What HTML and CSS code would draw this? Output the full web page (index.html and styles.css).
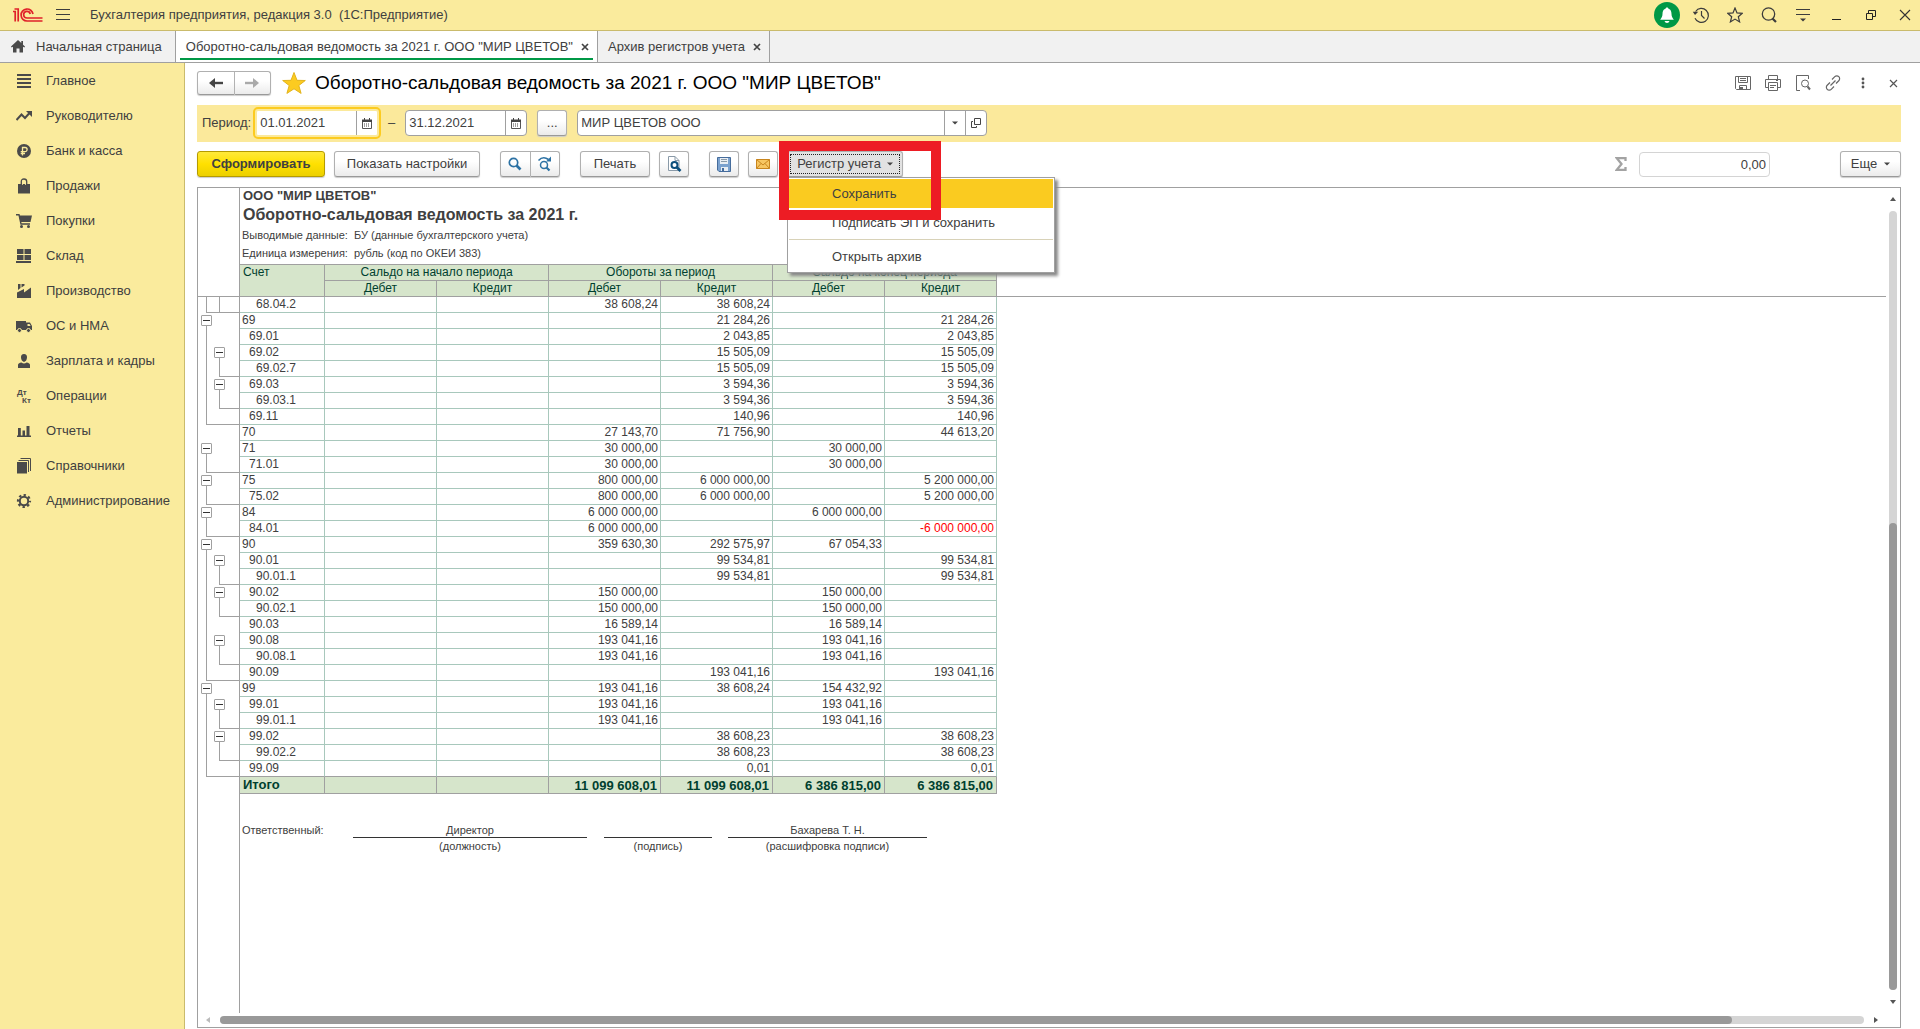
FILE: index.html
```html
<!DOCTYPE html>
<html lang="ru">
<head>
<meta charset="utf-8">
<title>Бухгалтерия предприятия, редакция 3.0 (1С:Предприятие)</title>
<link rel="stylesheet" href="styles.css">
</head>
<body>
<div class="app">
<header class="titlebar">
  <svg class="logo" width="30" height="14" viewBox="0 0 30 14" fill="none" stroke="#e0222a" stroke-width="1.7"><path d="M0 3.5H2.2V13.5M1.5 1H5.2V13.5"/><path d="M20 6A6 6 0 1 0 14 13H29.5M17.2 6A3.3 3.3 0 1 0 14 10H29.5"/></svg>
  <button class="plain menu-button" aria-label="Меню"><svg width="14" height="12" viewBox="0 0 14 12" stroke="#3c3c3c"><path d="M0 .5H14M0 5.5H14M0 10.5H14"/></svg></button>
  <span class="app-title">Бухгалтерия предприятия, редакция 3.0&nbsp; (1С:Предприятие)</span>
  <nav class="window-tools" aria-label="Окно">
    <button class="plain" aria-label="Уведомления"><svg width="26" height="26" viewBox="0 0 26 26"><circle cx="13" cy="13" r="13" fill="#009846"/><path d="M13 5.500c-1 0-1.400.6-1.500 1.300C9 7.600 8.600 9.800 8.500 12c-.1 2.500-.8 3.600-2.300 5.700h13.600c-1.500-2.100-2.200-3.200-2.300-5.700-.1-2.200-.5-4.400-3-5.200-.1-.7-.5-1.300-1.500-1.300zM10.500 19h5q-.6 2-2.500 2t-2.500-2z" fill="#fff"/></svg></button>
    <button class="plain" aria-label="История"><svg width="18" height="18" viewBox="0 0 18 18" fill="none" stroke="#3c3c3c" stroke-width="1.200"><path d="M3.600 5.500A7 7 0 1 1 3 12.300M9.500 5v4.500l3 3"/><path d="M.8 5.800h5.500L3 9z" fill="#3c3c3c" stroke="none"/></svg></button>
    <button class="plain" aria-label="Избранное"><svg width="16" height="16" viewBox="0 0 16 16" fill="none" stroke="#3c3c3c" stroke-width="1.200"><path d="M8 1l2 4.900 5.300.4-4 3.400 1.300 5.200L8 12.100l-4.600 2.800 1.300-5.200-4-3.400L6 5.900z"/></svg></button>
    <button class="plain" aria-label="Поиск"><svg width="16" height="16" viewBox="0 0 16 16" fill="none" stroke="#3c3c3c" stroke-width="1.300"><circle cx="7.500" cy="7" r="6.200"/><path d="M11.500 11.500L15 15" stroke-width="2.200"/></svg></button>
    <button class="plain" aria-label="Настройка"><svg width="14" height="14" viewBox="0 0 14 14"><path d="M0 1.500H14M0 6.500H14" stroke="#3c3c3c"/><path d="M4 10.500h6l-3 3z" fill="#3c3c3c"/></svg></button>
    <button class="plain" aria-label="Свернуть"><svg width="10" height="10" viewBox="0 0 10 10"><path d="M0 9.500H9" stroke="#222"/></svg></button>
    <button class="plain" aria-label="Развернуть"><svg width="10" height="10" viewBox="0 0 10 10" fill="none" stroke="#222"><path d="M.5 3.500h6v6h-6zM2.500 3V.5h7v6H7"/></svg></button>
    <button class="plain" aria-label="Закрыть"><svg width="12" height="12" viewBox="0 0 12 12" stroke="#333" stroke-width="1.100"><path d="M1 1l10 10M11 1L1 11"/></svg></button>
  </nav>
</header>
<nav class="tabs" aria-label="Вкладки">
  <a class="tab tab-home" href="#"><svg width="14" height="13" viewBox="0 0 14 13" fill="#4a4a4a"><path d="M7 0L0 6.500l.6 1L2 6.700V12.500H5.500V8.500H8.500V12.500H12V6.700l1.400.8.6-1-2-1.800V1H10.300V3z"/></svg>Начальная страница</a>
  <a class="tab active" href="#">Оборотно-сальдовая ведомость за 2021 г. ООО "МИР ЦВЕТОВ"<svg width="8" height="8" viewBox="0 0 8 8" stroke="#444" stroke-width="1.700"><path d="M1 1l6 6M7 1L1 7"/></svg></a>
  <a class="tab" href="#">Архив регистров учета<svg width="8" height="8" viewBox="0 0 8 8" stroke="#444" stroke-width="1.700"><path d="M1 1l6 6M7 1L1 7"/></svg></a>
</nav>
<div class="body">
<nav class="sidebar" aria-label="Разделы">
  <a href="#"><svg width="16" height="16" viewBox="0 0 16 16"><path d="M1 2H15M1 6H15M1 10H15M1 14H15" stroke="#4a4a4a" stroke-width="2"/></svg>Главное</a>
  <a href="#"><svg width="16" height="16" viewBox="0 0 16 16"><path d="M.5 12L5.500 6.500 9 10l4.500-5" fill="none" stroke="#4a4a4a" stroke-width="2"/><path d="M10 3h6v6z" fill="#4a4a4a"/></svg>Руководителю</a>
  <a href="#"><svg width="16" height="16" viewBox="0 0 16 16"><circle cx="8" cy="8" r="7" fill="#4a4a4a"/><path d="M6.500 12.500V4.500H9a2 2 0 0 1 0 4.200H4.700M4.700 10.500H9" fill="none" stroke="#faeb9d" stroke-width="1.300"/></svg>Банк и касса</a>
  <a href="#"><svg width="16" height="16" viewBox="0 0 16 16"><path d="M2 6H14V15.500H2z" fill="#4a4a4a"/><path d="M5.300 7V3.500Q5.300 1 8 1t2.700 2.500V7" fill="none" stroke="#4a4a4a" stroke-width="1.300"/><path d="M6 6.500H6.800M9.200 6.500H10" stroke="#faeb9d"/></svg>Продажи</a>
  <a href="#"><svg width="16" height="16" viewBox="0 0 16 16"><path d="M0 1.700H3L5 11H14" fill="none" stroke="#4a4a4a" stroke-width="1.400"/><path d="M3 2.500H16L14.500 9H4.500z" fill="#4a4a4a"/><circle cx="5.500" cy="13.500" r="1.500" fill="#4a4a4a"/><circle cx="12.500" cy="13.500" r="1.500" fill="#4a4a4a"/></svg>Покупки</a>
  <a href="#"><svg width="16" height="16" viewBox="0 0 16 16" fill="#4a4a4a"><path d="M1 1H7.500V6H1zM8.500 1H15V6H8.500zM1 7H7.500V12H1zM8.500 7H15V12H8.500zM0 13H15V15H0z"/></svg>Склад</a>
  <a href="#"><svg width="16" height="16" viewBox="0 0 16 16" fill="#4a4a4a"><path d="M1 15V9.500L8 6V9.500L15 4.500V15zM2 1H4.500V5L2 7zM5.500 1H8.500V2.500L5.500 4.500z"/></svg>Производство</a>
  <a href="#"><svg width="16" height="16" viewBox="0 0 16 16"><path d="M0 3H10V4.500H14L16 8V12H0z" fill="#4a4a4a"/><path d="M11.500 6H13.500L14.600 8H11.500z" fill="#faeb9d"/><circle cx="3.500" cy="12.500" r="2" fill="#4a4a4a" stroke="#faeb9d"/><circle cx="12.500" cy="12.500" r="2" fill="#4a4a4a" stroke="#faeb9d"/></svg>ОС и НМА</a>
  <a href="#"><svg width="16" height="16" viewBox="0 0 16 16" fill="#4a4a4a"><path d="M8 1Q11.200 1 11 4.500T8 9Q5.200 8 5 4.500T8 1zM2 15V12Q2 10 5.500 9.500 8 11.500 10.500 9.500 14 10 14 12V15z"/></svg>Зарплата и кадры</a>
  <a href="#"><svg class="dtkt" width="16" height="16" viewBox="0 0 16 16" fill="#4a4a4a"><text x="1" y="7">Дт</text><text x="6" y="15">Кт</text></svg>Операции</a>
  <a href="#"><svg width="16" height="16" viewBox="0 0 16 16" fill="#4a4a4a"><path d="M1 12.500H15V14H1zM2 5H4.800V13H2zM6.500 7.500H9V13H6.500zM10.500 3H13.500V13H10.500z"/></svg>Отчеты</a>
  <a href="#"><svg width="16" height="16" viewBox="0 0 16 16"><path d="M1 4H11V15.500H1z" fill="#4a4a4a"/><path d="M2.500 2.500H12.500V14M4.500 .5H14.500V13" fill="none" stroke="#4a4a4a"/></svg>Справочники</a>
  <a href="#"><svg width="16" height="16" viewBox="0 0 16 16" fill="none" stroke="#4a4a4a"><circle cx="8" cy="8" r="4.200" stroke-width="2"/><circle cx="8" cy="8" r="6" stroke-width="2.200" stroke-dasharray="2.350 2.360" stroke-dashoffset="1.100"/></svg>Администрирование</a>
</nav>
<main class="main">
  <div class="page-head">
    <div class="group nav-group">
      <button class="btn" aria-label="Назад"><svg width="14" height="10" viewBox="0 0 14 10"><path d="M3 5H14" stroke="#444" stroke-width="2.400"/><path d="M0 5L6 0V10z" fill="#444"/></svg></button>
      <button class="btn" aria-label="Вперед"><svg width="14" height="10" viewBox="0 0 14 10"><path d="M0 5H11" stroke="#aaa" stroke-width="2.400"/><path d="M14 5L8 0V10z" fill="#aaa"/></svg></button>
    </div>
    <svg class="star" width="24" height="22" viewBox="0 0 24 22"><path d="M12 .5l3 7.800 8.300.2-6.500 5 2.300 7.900L12 16.800l-7.100 4.600 2.300-7.900-6.500-5L9 8.300z" fill="#fccb20" stroke="#e2b31c"/></svg>
    <h1>Оборотно-сальдовая ведомость за 2021 г. ООО "МИР ЦВЕТОВ"</h1>
    <div class="page-tools">
      <button class="plain" aria-label="Сохранить"><svg width="16" height="16" viewBox="0 0 16 16" fill="none" stroke="#666"><path d="M.5 1.500H15.500V14.500H1.500L.5 13.500zM3.500 1.500V7.500H12.500V1.500M5 3.500H11M5 5.500H11M4.500 14V10.500H11.500V14"/><path d="M5 12H8V14H5z" fill="#666" stroke="none"/></svg></button>
      <button class="plain" aria-label="Печать"><svg width="16" height="16" viewBox="0 0 16 16" fill="none" stroke="#666"><path d="M3.500 4V.5H12.500V4M3 12.500H.5V4.500H15.500V12.500H13M3.500 7.500H12.500V15.500H3.500zM5 10.500H11M5 12.500H9M11 5.500H13"/></svg></button>
      <button class="plain" aria-label="Просмотр"><svg width="16" height="16" viewBox="0 0 16 16" fill="none" stroke="#666"><path d="M5 15.500H1.500V.5H13.500V4"/><circle cx="10" cy="8.500" r="3.500"/><path d="M12.500 11.500L15 14.500" stroke-width="2"/></svg></button>
      <button class="plain" aria-label="Ссылка"><svg width="16" height="16" viewBox="0 0 16 16" fill="none" stroke="#666" stroke-width="1.200"><path d="M7 4.500l2.800-2.800a2.800 2.800 0 0 1 4 0 2.800 2.800 0 0 1 0 4L11 8.500M9 11.500l-2.800 2.800a2.800 2.800 0 0 1-4 0 2.800 2.800 0 0 1 0-4L5 7.500M5.500 10.500l5-5"/></svg></button>
      <button class="plain" aria-label="Еще"><svg width="16" height="16" viewBox="0 0 16 16" fill="#555"><circle cx="8" cy="4" r="1.400"/><circle cx="8" cy="8" r="1.400"/><circle cx="8" cy="12" r="1.400"/></svg></button>
      <button class="plain" aria-label="Закрыть"><svg width="16" height="16" viewBox="0 0 16 16" stroke="#555" stroke-width="1.200"><path d="M5 5l7 7M12 5l-7 7"/></svg></button>
    </div>
  </div>
  <form class="period">
    <label for="from">Период:</label>
    <div class="field date focused"><input id="from" value="01.01.2021"><button type="button" aria-label="Календарь"><svg width="10" height="11" viewBox="0 0 10 11"><path d="M.5 2.500H9.500V10.500H.5z" fill="#fff" stroke="#555"/><path d="M0 1.500H10V4H0z" fill="#444"/><path d="M2.500 0V2M7.500 0V2" stroke="#444"/><path d="M2 6H8M2 8H8" stroke="#444" stroke-dasharray="1 1"/></svg></button></div>
    <span class="dash">–</span>
    <div class="field date"><input aria-label="Конец периода" value="31.12.2021"><button type="button" aria-label="Календарь"><svg width="10" height="11" viewBox="0 0 10 11"><path d="M.5 2.500H9.500V10.500H.5z" fill="#fff" stroke="#555"/><path d="M0 1.500H10V4H0z" fill="#444"/><path d="M2.500 0V2M7.500 0V2" stroke="#444"/><path d="M2 6H8M2 8H8" stroke="#444" stroke-dasharray="1 1"/></svg></button></div>
    <button type="button" class="btn square">...</button>
    <div class="field org"><input aria-label="Организация" value="МИР ЦВЕТОВ ООО"><button type="button" aria-label="Выбрать"><svg width="6" height="4" viewBox="0 0 6 4"><path d="M0 .5H6L3 3.500z" fill="#444"/></svg></button><button type="button" aria-label="Открыть"><svg width="10" height="10" viewBox="0 0 10 10" fill="none" stroke="#444"><path d="M3.500 .5H9.500V6.500H3.500zM2 3.500H.5V9.500H5.500V8"/></svg></button></div>
  </form>
  <div class="toolbar">
    <button class="btn primary">Сформировать</button>
    <button class="btn settings">Показать настройки</button>
    <div class="group find-group">
      <button class="btn" aria-label="Найти"><svg width="14" height="14" viewBox="0 0 14 14" fill="none" stroke="#2d72a4"><circle cx="5.500" cy="5.500" r="4.200" stroke-width="1.700"/><path d="M8.500 8.500L12.500 12.500" stroke-width="2.600"/></svg></button>
      <button class="btn" aria-label="Найти далее"><svg width="16" height="16" viewBox="0 0 16 16" fill="none" stroke="#2d72a4"><circle cx="7" cy="9" r="3.500" stroke-width="1.500"/><path d="M9.500 11.500L12.500 14.500" stroke-width="2.200"/><path d="M1.500 4.500Q6-.5 11.500 3.500" stroke-width="1.600"/><path d="M14 .5V5.500H9z" fill="#2d72a4" stroke="none"/></svg></button>
    </div>
    <button class="btn print">Печать</button>
    <button class="btn square view" aria-label="Предварительный просмотр"><svg width="16" height="16" viewBox="0 0 16 16" fill="none"><path d="M2.500 .5H9L13 4.500V14.500H2.500z" fill="#fff" stroke="#8a9aa8"/><path d="M9 .5V4.500H13" stroke="#8a9aa8"/><circle cx="8.500" cy="9" r="3" fill="#fff" stroke="#0d4f7c" stroke-width="2"/><path d="M10.500 11L14.500 15" stroke="#0d4f7c" stroke-width="2.600"/></svg></button>
    <button class="btn square save" aria-label="Сохранить"><svg width="14" height="15" viewBox="0 0 14 15"><path d="M.5 .5H13.500V14.500H2L.5 13z" fill="#7ba2cf" stroke="#456c9c"/><path d="M3 1H11V7H3zM4 10H11V14H4z" fill="#e9eef4"/><path d="M4 2.500H10M4 4.500H10" stroke="#8a9aa8"/><path d="M5 11H7V14H5z" fill="#456c9c"/></svg></button>
    <button class="btn square mail" aria-label="Отправить по почте"><svg width="14" height="10" viewBox="0 0 14 10"><path d="M.5 .5H13.500V9.500H.5z" fill="#f7c763" stroke="#c8851e"/><path d="M.5 .5L7 6 13.500 .5M.5 9.500L5 4.500M13.500 9.500L9 4.500" fill="none" stroke="#c8851e"/></svg></button>
    <div class="dropdown">
      <button class="btn register" aria-haspopup="menu" aria-expanded="true">Регистр учета<svg width="6" height="4" viewBox="0 0 6 4"><path d="M0 .5H6L3 3.500z" fill="#444"/></svg></button>
      <div class="menu" role="menu">
        <button class="selected" role="menuitem">Сохранить</button>
        <button role="menuitem">Подписать ЭП и сохранить</button>
        <hr>
        <button role="menuitem">Открыть архив</button>
      </div>
      <div class="highlight"></div>
    </div>
    <svg class="sigma" width="12" height="14" viewBox="0 0 12 14"><path d="M10.500 4V1.200H1.800L6.500 7 1.800 12.800H10.500V10" fill="none" stroke="#a3a3a3" stroke-width="2.300"/></svg>
    <input class="sum" aria-label="Сумма" value="0,00" readonly>
    <button class="btn more">Еще<svg width="6" height="4" viewBox="0 0 6 4"><path d="M0 .5H6L3 3.500z" fill="#444"/></svg></button>
  </div>
  <section class="frame">
    <div class="sheet">
      <div class="doc-head">
        <p class="company">ООО "МИР ЦВЕТОВ"</p>
        <h2>Оборотно-сальдовая ведомость за 2021 г.</h2>
        <p><span>Выводимые данные:</span>БУ (данные бухгалтерского учета)</p>
        <p><span>Единица измерения:</span>рубль (код по ОКЕИ 383)</p>
      </div>
      <table>
        <colgroup><col class="c-tree"><col class="c-acc"><col class="c-num"><col class="c-num"><col class="c-num"><col class="c-num"><col class="c-num"><col class="c-num"><col></colgroup>
        <thead>
          <tr><td rowspan="2" class="edge"></td><th rowspan="2" class="acc">Счет</th><th colspan="2">Сальдо на начало периода</th><th colspan="2">Обороты за период</th><th colspan="2">Сальдо на конец периода</th><td rowspan="2" class="edge"></td></tr>
          <tr><th>Дебет</th><th>Кредит</th><th>Дебет</th><th>Кредит</th><th>Дебет</th><th>Кредит</th></tr>
        </thead>
        <tbody>
          <tr><td class="tree end1"><i class="line"></i><i class="line"></i></td><td class="lv3">68.04.2</td><td></td><td></td><td>38 608,24</td><td>38 608,24</td><td></td><td></td></tr>
          <tr><td class="tree"><button aria-label="Свернуть 69"></button></td><td>69</td><td></td><td></td><td></td><td>21 284,26</td><td></td><td>21 284,26</td></tr>
          <tr><td class="tree"><i class="line"></i></td><td class="lv2">69.01</td><td></td><td></td><td></td><td>2 043,85</td><td></td><td>2 043,85</td></tr>
          <tr><td class="tree"><i class="line"></i><button aria-label="Свернуть 69.02"></button></td><td class="lv2">69.02</td><td></td><td></td><td></td><td>15 505,09</td><td></td><td>15 505,09</td></tr>
          <tr><td class="tree end2"><i class="line"></i><i class="line"></i></td><td class="lv3">69.02.7</td><td></td><td></td><td></td><td>15 505,09</td><td></td><td>15 505,09</td></tr>
          <tr><td class="tree"><i class="line"></i><button aria-label="Свернуть 69.03"></button></td><td class="lv2">69.03</td><td></td><td></td><td></td><td>3 594,36</td><td></td><td>3 594,36</td></tr>
          <tr><td class="tree end2"><i class="line"></i><i class="line"></i></td><td class="lv3">69.03.1</td><td></td><td></td><td></td><td>3 594,36</td><td></td><td>3 594,36</td></tr>
          <tr><td class="tree end1"><i class="line"></i></td><td class="lv2">69.11</td><td></td><td></td><td></td><td>140,96</td><td></td><td>140,96</td></tr>
          <tr><td class="tree"></td><td>70</td><td></td><td></td><td>27 143,70</td><td>71 756,90</td><td></td><td>44 613,20</td></tr>
          <tr><td class="tree"><button aria-label="Свернуть 71"></button></td><td>71</td><td></td><td></td><td>30 000,00</td><td></td><td>30 000,00</td><td></td></tr>
          <tr><td class="tree end1"><i class="line"></i></td><td class="lv2">71.01</td><td></td><td></td><td>30 000,00</td><td></td><td>30 000,00</td><td></td></tr>
          <tr><td class="tree"><button aria-label="Свернуть 75"></button></td><td>75</td><td></td><td></td><td>800 000,00</td><td>6 000 000,00</td><td></td><td>5 200 000,00</td></tr>
          <tr><td class="tree end1"><i class="line"></i></td><td class="lv2">75.02</td><td></td><td></td><td>800 000,00</td><td>6 000 000,00</td><td></td><td>5 200 000,00</td></tr>
          <tr><td class="tree"><button aria-label="Свернуть 84"></button></td><td>84</td><td></td><td></td><td>6 000 000,00</td><td></td><td>6 000 000,00</td><td></td></tr>
          <tr><td class="tree end1"><i class="line"></i></td><td class="lv2">84.01</td><td></td><td></td><td>6 000 000,00</td><td></td><td></td><td class="negative">-6 000 000,00</td></tr>
          <tr><td class="tree"><button aria-label="Свернуть 90"></button></td><td>90</td><td></td><td></td><td>359 630,30</td><td>292 575,97</td><td>67 054,33</td><td></td></tr>
          <tr><td class="tree"><i class="line"></i><button aria-label="Свернуть 90.01"></button></td><td class="lv2">90.01</td><td></td><td></td><td></td><td>99 534,81</td><td></td><td>99 534,81</td></tr>
          <tr><td class="tree end2"><i class="line"></i><i class="line"></i></td><td class="lv3">90.01.1</td><td></td><td></td><td></td><td>99 534,81</td><td></td><td>99 534,81</td></tr>
          <tr><td class="tree"><i class="line"></i><button aria-label="Свернуть 90.02"></button></td><td class="lv2">90.02</td><td></td><td></td><td>150 000,00</td><td></td><td>150 000,00</td><td></td></tr>
          <tr><td class="tree end2"><i class="line"></i><i class="line"></i></td><td class="lv3">90.02.1</td><td></td><td></td><td>150 000,00</td><td></td><td>150 000,00</td><td></td></tr>
          <tr><td class="tree"><i class="line"></i></td><td class="lv2">90.03</td><td></td><td></td><td>16 589,14</td><td></td><td>16 589,14</td><td></td></tr>
          <tr><td class="tree"><i class="line"></i><button aria-label="Свернуть 90.08"></button></td><td class="lv2">90.08</td><td></td><td></td><td>193 041,16</td><td></td><td>193 041,16</td><td></td></tr>
          <tr><td class="tree end2"><i class="line"></i><i class="line"></i></td><td class="lv3">90.08.1</td><td></td><td></td><td>193 041,16</td><td></td><td>193 041,16</td><td></td></tr>
          <tr><td class="tree end1"><i class="line"></i></td><td class="lv2">90.09</td><td></td><td></td><td></td><td>193 041,16</td><td></td><td>193 041,16</td></tr>
          <tr><td class="tree"><button aria-label="Свернуть 99"></button></td><td>99</td><td></td><td></td><td>193 041,16</td><td>38 608,24</td><td>154 432,92</td><td></td></tr>
          <tr><td class="tree"><i class="line"></i><button aria-label="Свернуть 99.01"></button></td><td class="lv2">99.01</td><td></td><td></td><td>193 041,16</td><td></td><td>193 041,16</td><td></td></tr>
          <tr><td class="tree end2"><i class="line"></i><i class="line"></i></td><td class="lv3">99.01.1</td><td></td><td></td><td>193 041,16</td><td></td><td>193 041,16</td><td></td></tr>
          <tr><td class="tree"><i class="line"></i><button aria-label="Свернуть 99.02"></button></td><td class="lv2">99.02</td><td></td><td></td><td></td><td>38 608,23</td><td></td><td>38 608,23</td></tr>
          <tr><td class="tree end2"><i class="line"></i><i class="line"></i></td><td class="lv3">99.02.2</td><td></td><td></td><td></td><td>38 608,23</td><td></td><td>38 608,23</td></tr>
          <tr class="last"><td class="tree end1"><i class="line"></i></td><td class="lv2">99.09</td><td></td><td></td><td></td><td>0,01</td><td></td><td>0,01</td></tr>
        </tbody>
        <tfoot>
          <tr><td class="tree"></td><th scope="row" class="acc">Итого</th><td></td><td></td><td>11 099 608,01</td><td>11 099 608,01</td><td>6 386 815,00</td><td>6 386 815,00</td></tr>
        </tfoot>
      </table>
      <div class="signatures">
        <span class="who">Ответственный:</span>
        <div class="sign position"><span>Директор</span><small>(должность)</small></div>
        <div class="sign autograph"><span></span><small>(подпись)</small></div>
        <div class="sign fullname"><span>Бахарева Т. Н.</span><small>(расшифровка подписи)</small></div>
      </div>
    </div>
    <div class="vscroll"><svg width="6" height="4" viewBox="0 0 6 4"><path d="M0 4H6L3 0z" fill="#555"/></svg><div class="track"><div class="thumb"></div></div><svg width="6" height="4" viewBox="0 0 6 4"><path d="M0 0H6L3 4z" fill="#555"/></svg></div>
    <div class="hscroll"><svg width="4" height="6" viewBox="0 0 4 6"><path d="M4 0V6L0 3z" fill="#bbb"/></svg><div class="track"><div class="thumb"></div></div><svg width="4" height="6" viewBox="0 0 4 6"><path d="M0 0V6L4 3z" fill="#555"/></svg></div>
  </section>
</main>
</div>
</div>
</body>
</html>
```
FILE: styles.css
```css
* { box-sizing: border-box; }
body { margin: 0; font: 13px/16px "Liberation Sans", Arial, sans-serif; color: #404040; background: #fff; }
button, input { font: inherit; color: inherit; }
button { padding: 0; cursor: pointer; }
svg { flex: none; }
h1, h2, p { margin: 0; }
.app { display: flex; flex-direction: column; min-height: 100vh; }
.plain { display: flex; align-items: center; justify-content: center; border: 0; background: none; }

.titlebar { display: flex; align-items: center; height: 31px; padding: 0 2px 0 13px; background: #faeb9d; border-bottom: 1px solid #cabb6c; }
.menu-button { margin: 0 20px 0 13px; }
.app-title { white-space: nowrap; }
.window-tools { display: flex; gap: 8px; margin-left: auto; }
.window-tools .plain { width: 26px; height: 30px; }

.tabs { display: flex; height: 32px; background: #f1f1f1; border-bottom: 1px solid #a0a0a0; }
.tab { display: flex; align-items: center; gap: 8px; padding: 0 8px 0 10px; border-right: 1px solid #a0a0a0; color: inherit; text-decoration: none; white-space: nowrap; }
.tab-home { gap: 11px; padding: 0 13px 0 11px; }
.tab.active { background: linear-gradient(#009846, #009846) center 27px / calc(100% - 8px) 2px no-repeat #fff; }

.body { display: flex; flex: 1; }
.sidebar { flex: none; width: 185px; background: #faeb9d; border-right: 1px solid #cabb6c; }
.sidebar a { display: flex; align-items: center; gap: 14px; height: 35px; padding-left: 16px; color: inherit; text-decoration: none; }
.dtkt text { font: bold 8px "Liberation Sans", Arial, sans-serif; }

.main { display: flex; flex: 1; flex-direction: column; min-width: 0; padding: 0 19px 1px 12px; }
.btn { display: flex; align-items: center; justify-content: center; height: 26px; border: 1px solid #b0b0b0; border-bottom-color: #999; border-radius: 3px; background: linear-gradient(#fff 40%, #ebebeb); box-shadow: 0 1px 1px #ccc; white-space: nowrap; }
.square { width: 30px; }
.group { display: flex; }
.group .btn { flex: 1; }
.group .btn:first-child { border-radius: 3px 0 0 3px; }
.group .btn:last-child { border-left: 0; border-radius: 0 3px 3px 0; }

.page-head { display: flex; align-items: center; height: 42px; padding-bottom: 2px; }
.nav-group { width: 74px; }
.nav-group .btn { height: 24px; }
.star { margin: 0 9px 0 11px; }
h1 { font-size: 19px; line-height: 22px; font-weight: normal; color: #000; white-space: nowrap; }
.page-tools { display: flex; gap: 14px; margin-left: auto; }

.period { display: flex; align-items: center; height: 37px; padding: 0 0 1px 5px; background: #fbe99b; }
.field { display: flex; height: 26px; border: 1px solid #a0a0a0; border-radius: 4px; background: #fff; }
.field input { flex: 1; min-width: 0; padding: 0 3px; border: 0; outline: 0; background: none; }
.field button { display: flex; align-items: center; justify-content: center; width: 21px; border: 0; border-left: 1px solid #a0a0a0; background: none; }
.date { width: 122px; }
.focused { margin-left: 5px; outline: 2px solid #fccb20; outline-offset: 1px; border-color: #fbe99b; border-radius: 2px; }
.dash { width: 27px; text-align: center; }
.period .square { margin: 0 10px; }
.org { width: 410px; }

.toolbar { display: flex; align-items: center; height: 45px; padding-bottom: 1px; }
.primary { width: 128px; border-color: #b59b00; background: linear-gradient(#ffe93a, #ffe000 50%, #ecd000); font-weight: bold; }
.settings { width: 146px; margin: 0 20px 0 9px; }
.find-group { width: 60px; }
.print { width: 70px; margin: 0 9px 0 20px; }
.save { margin: 0 9px 0 20px; }
.dropdown { position: relative; margin-left: 9px; }
.register { gap: 6px; width: 116px; background: #e2e2e2; outline: 1px dotted #222; outline-offset: -4px; }
.menu { position: absolute; z-index: 1; top: 26px; left: 0; width: 268px; padding: 1px; border: 1px solid #a0a0a0; background: #fff; box-shadow: 3px 3px 3px #888; }
.menu button { display: block; width: 100%; height: 29px; padding-left: 43px; border: 0; background: none; text-align: left; }
.menu .selected { background: #facb20; }
.menu hr { height: 1px; margin: 2px 0; border: 0; background: #d8d2b8; }
.highlight { position: absolute; z-index: 2; top: -10px; left: -8px; width: 162px; height: 79px; border: 10px solid #ed1c24; pointer-events: none; }
.sigma { margin-left: auto; }
.sum { width: 131px; height: 25px; margin: 0 70px 0 12px; padding: 0 3px; border: 1px solid #d4d4d4; border-radius: 4px; text-align: right; }
.more { gap: 7px; width: 61px; }

.frame { display: grid; flex: 1; grid-template: 1fr 14px / minmax(0, 1fr) 14px; border: 1px solid #a0a0a0; }
.sheet { background: linear-gradient(#a0a0a0, #a0a0a0) 41px 0 / 1px 100% no-repeat; font-size: 12px; line-height: 15px; }
.doc-head { height: 76px; padding-left: 44px; font-size: 11px; }
.doc-head p { height: 18px; line-height: 18px; }
.doc-head span { display: inline-block; width: 112px; }
.doc-head .company { height: 16px; padding-left: 1px; font-size: 13px; line-height: 16px; font-weight: bold; }
h2 { padding-left: 1px; font-size: 16px; line-height: 22px; }

table { width: 100%; table-layout: fixed; border-spacing: 0; }
.c-tree { width: 42px; }
.c-acc { width: 85px; }
.c-num { width: 112px; }
td, th { height: 16px; padding: 0 2px; border: 0 solid #a8c8bc; border-width: 0 1px 1px 0; text-align: right; white-space: nowrap; }
thead th { border-color: #a0a0a0; background: #d6e5cb; color: #003f2f; font-weight: normal; text-align: center; }
thead tr:first-child th { height: 17px; border-top-width: 1px; }
thead .acc, tfoot .acc { padding-left: 3px; text-align: left; vertical-align: top; }
thead .edge { border-width: 0 0 1px; border-color: #a0a0a0; }
tbody td:nth-child(2) { padding-left: 2px; text-align: left; }
tbody .lv2:nth-child(2) { padding-left: 9px; }
tbody .lv3:nth-child(2) { padding-left: 16px; }
.last td:not(.tree) { border-bottom-color: #a0a0a0; }
.negative { color: #f00; }
tfoot td, tfoot th { height: 17px; border-color: #a0a0a0; background: #d6e5cb; color: #003f2f; font-size: 13px; font-weight: bold; }
tfoot td { padding-right: 3px; }
td.tree { height: 16px; padding: 0 0 0 3px; border-width: 0; background: none; font-size: 0; line-height: 0; text-align: left; vertical-align: top; }
.tree button, .tree i { display: inline-block; width: 11px; margin-right: 2px; vertical-align: top; }
.tree button { height: 11px; margin-top: 2px; border: 1px solid #a0a0a0; border-radius: 1px; background: linear-gradient(#333, #333) center / 7px 1px no-repeat #fff; }
.line { height: 16px; background: linear-gradient(#a0a0a0, #a0a0a0) 5px 0 / 1px 100% no-repeat; }
td.tree:has(button) { background: linear-gradient(#a0a0a0, #a0a0a0) 8px 100% / 1px 3px no-repeat; }
td.tree:has(i + button) { background-position: 21px 100%; }
td.end1 { background: linear-gradient(#a0a0a0, #a0a0a0) 8px 100% / 33px 1px no-repeat; }
td.end2 { background: linear-gradient(#a0a0a0, #a0a0a0) 21px 100% / 20px 1px no-repeat; }

.signatures { display: flex; margin-top: 29px; padding-left: 44px; font-size: 11px; }
.who { width: 111px; line-height: 15px; }
.sign { text-align: center; }
.sign span { display: block; height: 15px; border-bottom: 1px solid #333; }
.sign small { display: block; font-size: 11px; line-height: 16px; }
.position { width: 234px; margin-right: 17px; }
.autograph { width: 108px; margin-right: 16px; }
.fullname { width: 199px; }

.vscroll { display: flex; flex-direction: column; align-items: center; gap: 10px; padding: 9px 0; }
.hscroll { display: flex; align-items: center; gap: 10px; padding: 0 8px; }
.track { flex: 1; border-radius: 4px; background: #d5d5d5; }
.thumb { border-radius: 4px; background: #999; }
.vscroll .track { display: flex; width: 8px; flex-direction: column; justify-content: flex-end; }
.vscroll .thumb { height: 60%; }
.hscroll .thumb { width: 92%; height: 8px; }
```
